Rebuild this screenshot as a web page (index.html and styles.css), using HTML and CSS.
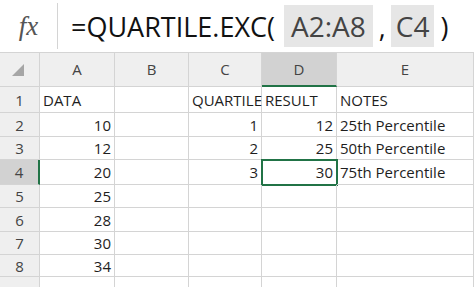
FILE: index.html
```html
<!DOCTYPE html>
<html lang="en">
<head>
    <meta charset="UTF-8">
    <title>QUARTILE.EXC</title>
    <link rel="stylesheet" href="styles.css">
</head>
<body>
    <div class="formula-bar">
        <div class="fx">fx</div>
        <div class="formula">=QUARTILE.EXC(<span class="ref">A2:A8</span>,<span class="ref ref-small">C4</span>)</div>
    </div>

    <div class="sheet">
        <!-- column headers -->
        <div class="hdr corner"><span class="tri"></span></div>
        <div class="hdr">A</div>
        <div class="hdr">B</div>
        <div class="hdr">C</div>
        <div class="hdr hdr-sel-col">D</div>
        <div class="hdr">E</div>

        <div class="rh">1</div>
        <div class="c">DATA</div>
        <div class="c"></div>
        <div class="c">QUARTILE</div>
        <div class="c">RESULT</div>
        <div class="c">NOTES</div>

        <div class="rh">2</div>
        <div class="c num">10</div>
        <div class="c"></div>
        <div class="c num">1</div>
        <div class="c num">12</div>
        <div class="c">25th Percentile</div>

        <div class="rh">3</div>
        <div class="c num">12</div>
        <div class="c"></div>
        <div class="c num">2</div>
        <div class="c num">25</div>
        <div class="c">50th Percentile</div>

        <div class="rh rh-sel">4</div>
        <div class="c num">20</div>
        <div class="c"></div>
        <div class="c num">3</div>
        <div class="c num active">30</div>
        <div class="c">75th Percentile</div>

        <div class="rh">5</div>
        <div class="c num">25</div>
        <div class="c"></div>
        <div class="c"></div>
        <div class="c"></div>
        <div class="c"></div>

        <div class="rh">6</div>
        <div class="c num">28</div>
        <div class="c"></div>
        <div class="c"></div>
        <div class="c"></div>
        <div class="c"></div>

        <div class="rh">7</div>
        <div class="c num">30</div>
        <div class="c"></div>
        <div class="c"></div>
        <div class="c"></div>
        <div class="c"></div>

        <div class="rh">8</div>
        <div class="c num">34</div>
        <div class="c"></div>
        <div class="c"></div>
        <div class="c"></div>
        <div class="c"></div>

        <div class="rh"></div>
        <div class="c"></div>
        <div class="c"></div>
        <div class="c"></div>
        <div class="c"></div>
        <div class="c"></div>
    </div>
</body>
</html>
```

FILE: styles.css
```css
body {
    margin: 0;
    background-color: #fff;
    font-family: "Open Sans", "Noto Sans", sans-serif;
    overflow: hidden;
}

.formula-bar {
    display: flex;
    align-items: center;
    height: 52px;
    border-bottom: 1px solid #d4d4d4;
}

.fx {
    width: 57px;
    height: 46px;
    line-height: 46px;
    text-align: center;
    font-family: "Liberation Serif", serif;
    font-style: italic;
    font-size: 27px;
    color: #555;
    border-right: 1px solid #d4d4d4;
}

.formula {
    padding-left: 13px;
    font-size: 27px;
    color: #111;
    display: flex;
    align-items: center;
    white-space: pre;
}

.ref {
    background-color: #e6e6e6;
    color: #444;
    font-size: 28px;
    padding: 5px 7px;
    margin: 0 6px 0 9px;
    line-height: 32px;
}

.ref-small {
    padding: 5px 5px;
    margin: 0 6px 0 5px;
}

.sheet {
    display: grid;
    grid-template-columns: 40px 75px 74px 73px 75px 137px;
    grid-template-rows: 34px 26px 24px 23px 25px 23px 24px 23px 22px 20px;
    font-size: 15px;
    color: #1e1e1e;
}

.hdr {
    background-color: #efefef;
    color: #444;
    text-align: center;
    line-height: 33px;
    border-right: 1px solid #d4d4d4;
    border-bottom: 1px solid #d4d4d4;
}

.corner {
    position: relative;
}

.tri {
    position: absolute;
    left: 12px;
    top: 11px;
    width: 0;
    height: 0;
    border-left: 12px solid transparent;
    border-bottom: 12px solid #a6a6a6;
}

.hdr-sel-col {
    background-color: #d2d2d2;
    border-bottom: 2px solid #217346;
    line-height: 32px;
}

.rh {
    background-color: #efefef;
    color: #444;
    text-align: center;
    border-right: 1px solid #d4d4d4;
    border-bottom: 1px solid #d4d4d4;
    display: flex;
    align-items: center;
    justify-content: center;
}

.rh-sel {
    background-color: #d2d2d2;
    border-right: 2px solid #217346;
}

.c {
    border-right: 1px solid #d4d4d4;
    border-bottom: 1px solid #d4d4d4;
    padding: 0 3px;
    display: flex;
    align-items: center;
    white-space: nowrap;
}

.num {
    justify-content: flex-end;
}

.active {
    outline: 2px solid #217346;
    outline-offset: -1px;
}
```
